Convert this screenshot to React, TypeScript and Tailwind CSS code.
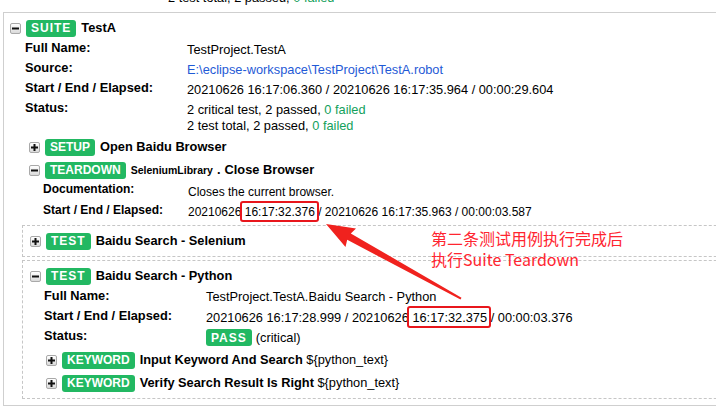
import type { ReactNode } from "react";

// toggle square (+ / −) used on every element header
function Toggle({ open }: { open: boolean }) {
  return (
    <span className="inline-flex h-[11px] w-[11px] shrink-0 items-center justify-center rounded-[2px] border border-[#a9a9a9] bg-linear-to-b from-white to-[#dadada]">
      <svg width="7" height="7" viewBox="0 0 7 7">
        <rect x="0" y="2.5" width="7" height="2" fill="#111" />
        {!open && <rect x="2.5" y="0" width="2" height="7" fill="#111" />}
      </svg>
    </span>
  );
}

function Badge({ label, wide }: { label: string; wide?: boolean }) {
  return (
    <span
      className={`inline-flex h-[17px] shrink-0 items-center rounded-[3px] bg-[#22b862] px-[5px] text-[12px] font-bold leading-none text-white ${
        wide ? "tracking-[1px]" : ""
      }`}
    >
      {label}
    </span>
  );
}

function Header({
  open,
  label,
  wide,
  small,
  children,
}: {
  open: boolean;
  label: string;
  wide?: boolean;
  small?: boolean;
  children: ReactNode;
}) {
  return (
    <div className={`flex items-center whitespace-nowrap ${small ? "h-[18px]" : "h-[20px]"}`}>
      <Toggle open={open} />
      <span className="ml-[5px] flex">
        <Badge label={label} wide={wide} />
      </span>
      <span className="ml-[5px] font-bold">{children}</span>
    </div>
  );
}

// red annotation box drawn over a piece of text
function Marked({ children }: { children: ReactNode }) {
  return (
    <span className="relative">
      {children}
      <span className="pointer-events-none absolute -top-[4px] -bottom-[3px] -left-[5px] -right-[4px] rounded-[3px] border-2 border-[#e8161c]" />
    </span>
  );
}

const Failed = () => <span className="text-[#13a15c]">0 failed</span>;

export default function App() {
  return (
    <div className="relative h-[411px] w-[716px] overflow-hidden bg-white font-['Liberation_Sans',Arial,sans-serif] text-[12.8px] text-black">
      {/* status of the parent suite, scrolled mostly out of view */}
      <div className="-mt-[10px] whitespace-nowrap pl-[168px] leading-[16px]">
        2 test total, 2 passed, <Failed />
      </div>

      {/* suite TestA */}
      <div className="ml-[3px] mt-[6px] w-[800px] border border-[#cfcfcf] pb-[6px]">
        <div className="pl-[6px] pt-[5px]">
          <Header open label="SUITE" wide>
            TestA
          </Header>
        </div>

        <div className="grid grid-cols-[162px_1fr] pl-[21px]">
          <div className="font-bold leading-[20px]">Full Name:</div>
          <div className="pt-[4px] leading-[16px]">TestProject.TestA</div>
          <div className="font-bold leading-[20px]">Source:</div>
          <div className="pt-[4px] leading-[16px] text-[#1f5ad6]">
            E:\eclipse-workspace\TestProject\TestA.robot
          </div>
          <div className="font-bold leading-[20px]">Start / End / Elapsed:</div>
          <div className="pt-[4px] leading-[16px]">
            20210626 16:17:06.360 / 20210626 16:17:35.964 / 00:00:29.604
          </div>
          <div className="font-bold leading-[20px]">Status:</div>
          <div className="pt-[4px] leading-[16px]">
            <div>
              2 critical test, 2 passed, <Failed />
            </div>
            <div>
              2 test total, 2 passed, <Failed />
            </div>
          </div>
        </div>

        <div className="ml-[18px]">
          {/* setup */}
          <div className="pl-[7px] pt-[4px]">
            <Header open={false} label="SETUP" small>
              Open Baidu Browser
            </Header>
          </div>

          {/* teardown */}
          <div className="pl-[7px] pt-[5px]">
            <Header open label="TEARDOWN" small>
              <span className="text-[10.5px]">SeleniumLibrary</span>
              <span className="mx-[4px]">.</span>
              Close Browser
            </Header>
          </div>
          <div className="grid grid-cols-[145px_1fr] pl-[21px] text-[12px]">
            <div className="font-bold leading-[20px]">Documentation:</div>
            <div className="pt-[5px] leading-[16px]">Closes the current browser.</div>
            <div className="font-bold leading-[20px]">Start / End / Elapsed:</div>
            <div className="whitespace-nowrap pt-[4px] leading-[16px]">
              20210626 <Marked>16:17:32.376</Marked> / 20210626 16:17:35.963 / 00:00:03.587
            </div>
          </div>

          {/* test: selenium */}
          <div className="mt-[5px] border border-dashed border-[#c6c6c6] pb-[5px] pl-[7px] pt-[5px]">
            <Header open={false} label="TEST" wide>
              Baidu Search - Selenium
            </Header>
          </div>

          {/* test: python */}
          <div className="mt-[3px] border border-dashed border-[#c6c6c6] pb-[6px]">
            <div className="pl-[7px] pt-[5px]">
              <Header open label="TEST" wide>
                Baidu Search - Python
              </Header>
            </div>
            <div className="grid grid-cols-[162px_1fr] pl-[21px]">
              <div className="font-bold leading-[20px]">Full Name:</div>
              <div className="pt-[3px] leading-[16px]">TestProject.TestA.Baidu Search - Python</div>
              <div className="font-bold leading-[20px]">Start / End / Elapsed:</div>
              <div className="whitespace-nowrap pt-[4px] leading-[16px]">
                20210626 16:17:28.999 / 20210626 <Marked>16:17:32.375</Marked> / 00:00:03.376
              </div>
              <div className="font-bold leading-[20px]">Status:</div>
              <div className="flex items-center gap-[4px] pt-[3px] leading-[16px]">
                <Badge label="PASS" wide />
                (critical)
              </div>
            </div>
            <div className="ml-[16px]">
              <div className="pl-[7px] pt-[5px]">
                <Header open={false} label="KEYWORD" small>
                  Input Keyword And Search <span className="font-normal">{"${python_text}"}</span>
                </Header>
              </div>
              <div className="pl-[7px] pt-[5px]">
                <Header open={false} label="KEYWORD" small>
                  Verify Search Result Is Right <span className="font-normal">{"${python_text}"}</span>
                </Header>
              </div>
            </div>
          </div>
        </div>
      </div>

      {/* annotation */}
      <div className="pointer-events-none absolute left-[431px] top-[228px] whitespace-nowrap font-['Noto_Sans_CJK_SC','Noto_Sans',sans-serif] text-[16px] leading-[21px] text-[#ff2530]">
        <div>第二条测试用例执行完成后</div>
        <div>执行Suite Teardown</div>
      </div>
      <svg className="pointer-events-none absolute left-0 top-0" width="716" height="411" viewBox="0 0 716 411">
        <polygon
          points="326,224 356,228.5 350.8,233.4 461.5,297.8 460.5,299.6 347.2,239.8 345.5,247"
          fill="#f0221e"
        />
      </svg>
    </div>
  );
}
